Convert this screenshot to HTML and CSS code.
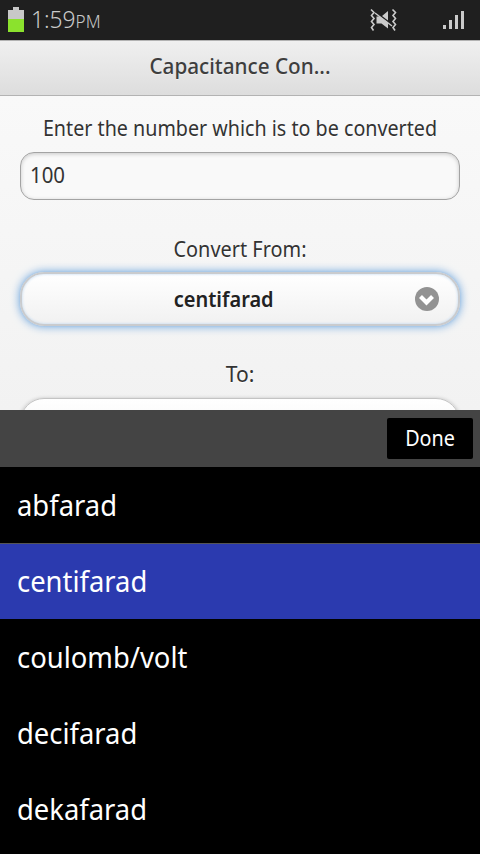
FILE: index.html
```html
<!DOCTYPE html>
<html lang="en">
<head>
<meta charset="utf-8">
<title>Capacitance Converter</title>
<link rel="stylesheet" href="styles.css">
</head>
<body>
<div class="screen">
  <div class="status">
    <svg class="battery" width="16" height="25" viewBox="0 0 16 25"><path fill="#c8c8c8" d="M5 0h6v3h5v9H0V3h5z"/><path fill="#8be22d" d="M0 12h16v13H0z"/></svg>
    <span class="clock">1:59<span class="meridiem">PM</span></span>
    <svg class="mute" width="27" height="24" viewBox="0 0 27 24">
      <g fill="none" stroke="#cacaca" stroke-width="1.6"><path d="M1 1.500l3 3-2.500 3L4 10.500l-2.500 3L4 16.500l-2.500 3L3.500 22.500"/><path d="M22.500 1.500l3 3-2.500 3 2.500 3-2.500 3 2.500 3-2.500 3 2 3"/></g>
      <path fill="#cacaca" d="M12 8l6-5v9.500zM6.500 8.500h3.500L18 14.500V20.500l-6.500-5h-5z"/>
      <path stroke="#cacaca" stroke-width="1.500" d="M5 5l17 13"/>
    </svg>
    <svg class="signal" width="21" height="18" viewBox="0 0 21 18" fill="#cacaca"><path d="M0 14h3v4H0zM6 9h3v9H6zM12 4h3v14h-3zM18 0h3v18h-3z"/></svg>
  </div>
  <div class="page">
    <header class="header"><h1 class="title">Capacitance Con...</h1></header>
    <main class="form">
      <div class="label label-number">Enter the number which is to be converted</div>
      <div class="field"><span class="field-text">100</span></div>
      <div class="label label-from">Convert From:</div>
      <div class="select select-focus">
        <span class="select-text">centifarad</span>
        <svg class="chevron" width="24" height="24" viewBox="0 0 24 24"><circle cx="12" cy="12" r="12" fill="#929292"/><path fill="none" stroke="#fff" stroke-width="4.200" d="M5.500 9.500l6 6 6-6"/></svg>
      </div>
      <div class="label label-to">To:</div>
      <div class="select"></div>
    </main>
  </div>
  <div class="toolbar"><div class="done"><span class="done-text">Done</span></div></div>
  <div class="options">
    <div class="option"><span class="option-text">abfarad</span></div>
    <div class="option selected"><span class="option-text">centifarad</span></div>
    <div class="option"><span class="option-text">coulomb/volt</span></div>
    <div class="option"><span class="option-text">decifarad</span></div>
    <div class="option"><span class="option-text">dekafarad</span></div>
  </div>
</div>
</body>
</html>
```
FILE: styles.css
```css
* { box-sizing: border-box; }
body { margin: 0; font-family: "Noto Sans", "Open Sans", sans-serif; }
.screen { width: 480px; height: 854px; overflow: hidden; display: flex; flex-direction: column; background: #000; }
.status { height: 40px; flex: none; display: flex; background: #1f1f1f; color: #cacaca; padding-left: 8px; }
.battery { margin-top: 7px; }
.clock { margin-left: 7px; width: 90px; font-size: 24px; font-weight: 350; line-height: 38px; white-space: nowrap; transform: scaleX(.95); transform-origin: left; }
.meridiem { font-size: 18px; }
.mute { margin: 8px 0 0 249px; }
.signal { margin: 11px 0 0 46px; }
.page { height: 370px; flex: none; overflow: hidden; background: linear-gradient(#f9f9f9 56px, #f2f2f2); color: #333; }
.header { height: 56px; background: linear-gradient(#f0f0f0, #ddd); border-top: 1px solid #b3b3b3; border-bottom: 1px solid #b3b3b3; }
.title { margin: 0; text-align: center; font-size: 22px; font-weight: 500; line-height: 48px; transform: scaleX(.94); text-shadow: 0 1px 0 #eee; color: #3e3e3e; }
.form { display: flex; flex-direction: column; padding: 0 20px; text-align: center; }
.label { font-size: 21.3px; line-height: 30px; transform: scaleX(.925); white-space: nowrap; text-shadow: 0 1px 0 #fff; }
.label-number { margin-top: 17px; }
.field { margin-top: 9px; height: 48px; border: 1px solid #a3a3a3; border-radius: 14px; background: #f9f9f9; box-shadow: inset 0 1px 4px rgba(0,0,0,.2); text-align: left; padding-left: 9px; font-size: 21.5px; line-height: 44px; }
.field-text { display: inline-block; transform: scaleX(.95); transform-origin: left; }
.label-from { margin-top: 34px; transform: scaleX(.935); }
.select { height: 56px; border: 1px solid #c4c4c4; border-radius: 24px; background: linear-gradient(#fff, #f1f1f1); box-shadow: 0 1px 4px rgba(0,0,0,.3); display: flex; align-items: center; justify-content: center; position: relative; margin-top: 9px; }
.select-focus { margin-top: 8px; border: 2px solid #c9cbce; box-shadow: 0 0 2px #9bbfe4, 0 0 9px 1px #78ace0, inset 0 0 3px #b9d5f0; height: 54px; }
.select-text { font-size: 21.5px; font-weight: 650; line-height: 30px; color: #222; margin: 0 33px 0 0; transform: scaleX(.93); }
.chevron { position: absolute; right: 19px; top: 13px; }
.label-to { margin-top: 33px; transform: scaleX(.99); }
.toolbar { height: 57px; flex: none; background: #444; display: flex; justify-content: flex-end; padding: 8px 7px 0 0; }
.done { width: 86px; height: 41px; background: #000; color: #fff; border-radius: 2px; font-size: 21.5px; line-height: 40px; text-align: center; }
.done-text { display: inline-block; transform: scaleX(.92); }
.options { flex: none; }
.option { height: 76px; padding-left: 17px; color: #fff; font-size: 28.7px; line-height: 76px; }
.option-text { display: inline-block; transform: scaleX(.955); transform-origin: left; }
.selected { background: #2b3aaf; border-top: 1px solid #555; line-height: 74px; }
```
